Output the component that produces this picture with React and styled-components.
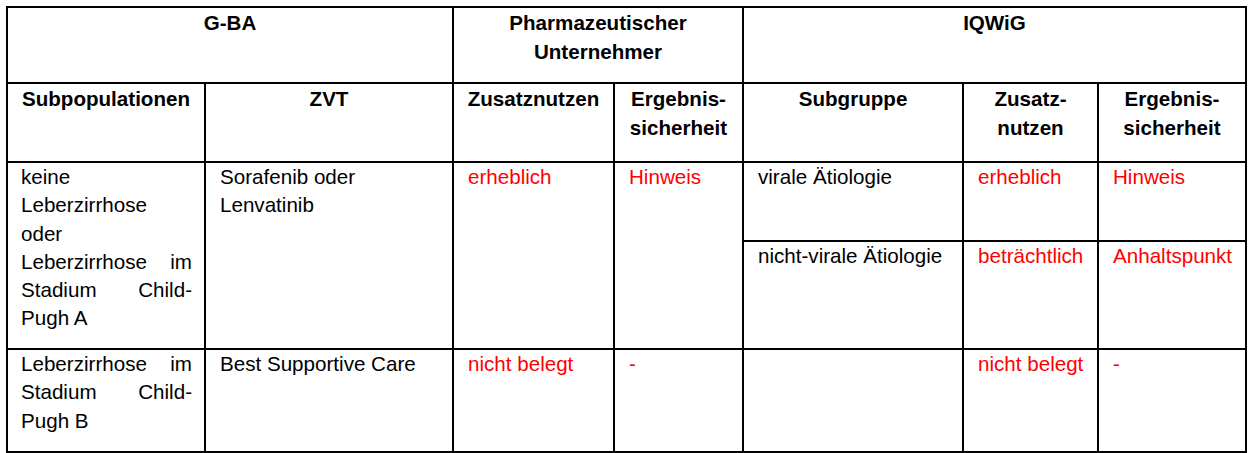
import React from 'react';
import styled, { createGlobalStyle } from 'styled-components';

const Global = createGlobalStyle`
  html, body { margin: 0; padding: 0; background: #fff; }
  body { font-family: "Liberation Sans", Arial, sans-serif; }
`;

const Page = styled.div`
  padding: 6px 0 0 6px;
`;

const Grid = styled.div`
  display: grid;
  width: max-content;
  grid-template-columns: 196px 246px 159px 127px 218px 133px 146px;
  grid-template-rows: 74px 77px 77px 106px 101px;
  gap: 2px;
  padding: 2px;
  background: #000;
`;

const Cell = styled.div`
  background: #fff;
  padding: 0 ${(p) => (p.$justify ? '12px 0 13px' : '11px 0 14px')};
  font-size: 20.6px;
  line-height: 28.3px;
  color: ${(p) => (p.$red ? '#ff0000' : '#000')};
  text-align: ${(p) => (p.$justify ? 'justify' : 'left')};
  grid-column: ${(p) => p.$col || 'auto'};
  grid-row: ${(p) => p.$row || 'auto'};
  white-space: ${(p) => (p.$nowrap ? 'nowrap' : 'normal')};
`;

const Head = styled(Cell)`
  padding: 0 12px;
  font-weight: bold;
  text-align: center;
  line-height: 29px;
`;

export default function App() {
  return (
    <>
      <Global />
      <Page>
        <Grid>
          <Head $col="1 / 3" $row="1">G-BA</Head>
          <Head $col="3 / 5" $row="1">
            Pharmazeutischer
            <br />
            Unternehmer
          </Head>
          <Head $col="5 / 8" $row="1">IQWiG</Head>

          <Head $row="2">Subpopulationen</Head>
          <Head $row="2">ZVT</Head>
          <Head $row="2">Zusatznutzen</Head>
          <Head $row="2">
            Ergebnis-
            <br />
            sicherheit
          </Head>
          <Head $row="2">Subgruppe</Head>
          <Head $row="2">
            Zusatz-
            <br />
            nutzen
          </Head>
          <Head $row="2">
            Ergebnis-
            <br />
            sicherheit
          </Head>

          <Cell $col="1" $row="3 / 5" $justify>
            keine Leberzirrhose oder Leberzirrhose im Stadium Child-Pugh A
          </Cell>
          <Cell $col="2" $row="3 / 5">
            Sorafenib oder
            <br />
            Lenvatinib
          </Cell>
          <Cell $col="3" $row="3 / 5" $red>erheblich</Cell>
          <Cell $col="4" $row="3 / 5" $red>Hinweis</Cell>
          <Cell $col="5" $row="3">virale Ätiologie</Cell>
          <Cell $col="6" $row="3" $red>erheblich</Cell>
          <Cell $col="7" $row="3" $red>Hinweis</Cell>
          <Cell $col="5" $row="4" $nowrap>nicht-virale Ätiologie</Cell>
          <Cell $col="6" $row="4" $red $nowrap>beträchtlich</Cell>
          <Cell $col="7" $row="4" $red $nowrap>Anhaltspunkt</Cell>

          <Cell $col="1" $row="5" $justify>
            Leberzirrhose im Stadium Child-Pugh B
          </Cell>
          <Cell $col="2" $row="5">Best Supportive Care</Cell>
          <Cell $col="3" $row="5" $red>nicht belegt</Cell>
          <Cell $col="4" $row="5" $red>-</Cell>
          <Cell $col="5" $row="5" />
          <Cell $col="6" $row="5" $red>nicht belegt</Cell>
          <Cell $col="7" $row="5" $red>-</Cell>
        </Grid>
      </Page>
    </>
  );
}
